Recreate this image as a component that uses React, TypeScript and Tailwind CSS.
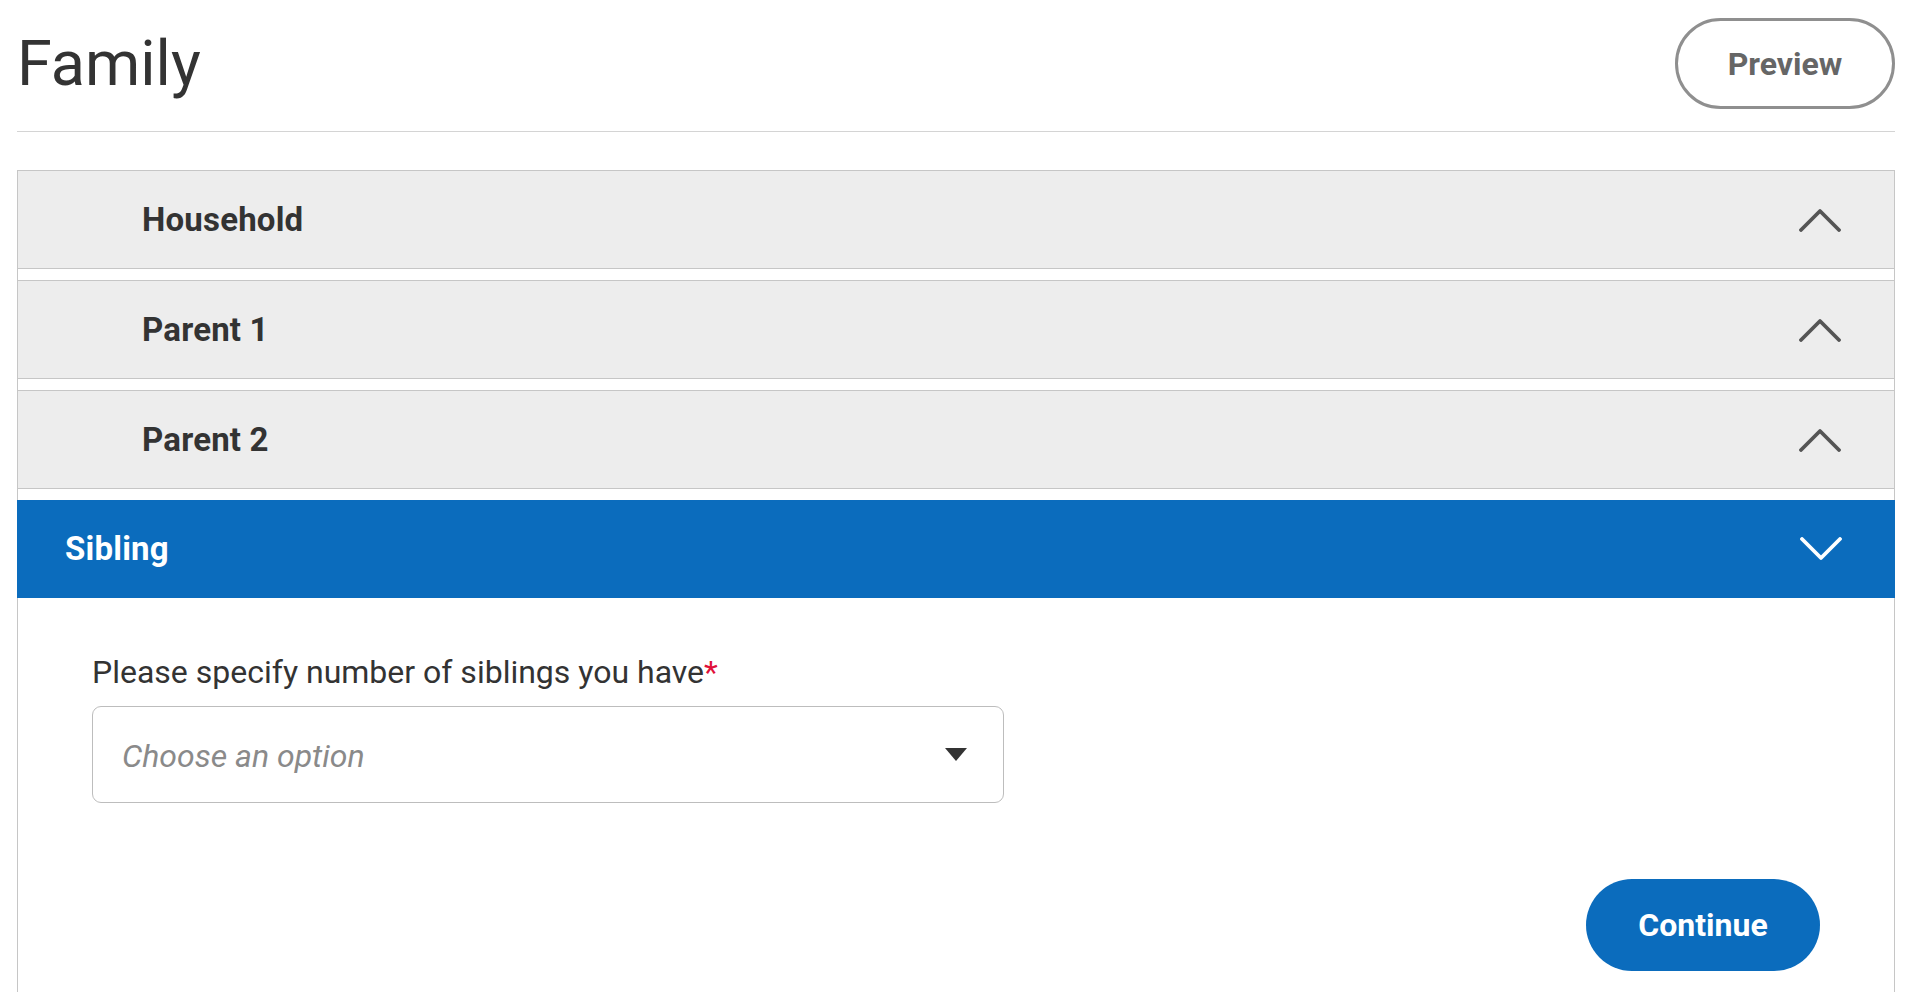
import React from "react";

function ChevronUp({ color }: { color: string }) {
  return (
    <svg width="42" height="25" viewBox="0 0 42 25" fill="none">
      <polyline points="2,23 21,4 40,23" stroke={color} strokeWidth="3.8" strokeLinecap="round" strokeLinejoin="round" />
    </svg>
  );
}

function ChevronDown({ color }: { color: string }) {
  return (
    <svg width="42" height="25" viewBox="0 0 42 25" fill="none">
      <polyline points="2,2 21,21 40,2" stroke={color} strokeWidth="3.8" strokeLinecap="round" strokeLinejoin="round" />
    </svg>
  );
}

function CollapsedHeader({ title }: { title: string }) {
  return (
    <div className="flex h-[99px] items-center justify-between border-y border-[#c6c6c6] bg-[#ededed] pl-[124px] pr-[53px]">
      <span className="text-[33px] font-bold tracking-[0.2px] text-[#333333]">{title}</span>
      <ChevronUp color="#555555" />
    </div>
  );
}

export default function App() {
  return (
    <div className="min-h-screen bg-white pl-[17px] pr-[22px]" style={{ fontFamily: "Roboto, 'Noto Sans', Arial, sans-serif" }}>
      <div className="flex items-center justify-between border-b border-[#d4d4d4] pb-[22px] pt-[18px]">
        <h1 className="text-[63px] font-normal leading-none text-[#333333]">Family</h1>
        <button className="flex h-[91px] w-[220px] items-center justify-center rounded-full border-[3px] border-[#8f8f8f] bg-white text-[32px] font-bold text-[#666666]">
          Preview
        </button>
      </div>

      <div className="mt-[38px] flex flex-col gap-[11px] border-x border-[#c6c6c6]">
        <CollapsedHeader title="Household" />
        <CollapsedHeader title="Parent 1" />
        <CollapsedHeader title="Parent 2" />
        <div>
          <div className="-mx-px flex h-[98px] items-center justify-between bg-[#0b6cbd] pl-[48px] pr-[53px]">
            <span className="text-[33px] font-bold tracking-[0.2px] text-white">Sibling</span>
            <ChevronDown color="#ffffff" />
          </div>
          <div className="flex flex-col pb-[40px] pl-[74px] pr-[74px] pt-[55px]">
            <label className="text-[32px] leading-[38px] text-[#333333]">
              Please specify number of siblings you have<span className="text-[#e0103a]">*</span>
            </label>
            <div className="mt-[15px] flex h-[97px] w-[912px] items-center justify-between rounded-[9px] border border-[#bdbdbd] pl-[29px] pr-[36px]">
              <span className="pt-[3px] text-[32px] italic text-[#8a8a8a]">Choose an option</span>
              <svg width="22" height="13" viewBox="0 0 22 13">
                <polygon points="0,0 22,0 11,13" fill="#333333" />
              </svg>
            </div>
            <div className="mt-[76px] flex justify-end">
              <button className="flex h-[92px] w-[234px] items-center justify-center rounded-full bg-[#0b6cbd] text-[32px] font-bold text-white">
                Continue
              </button>
            </div>
          </div>
        </div>
      </div>
    </div>
  );
}
